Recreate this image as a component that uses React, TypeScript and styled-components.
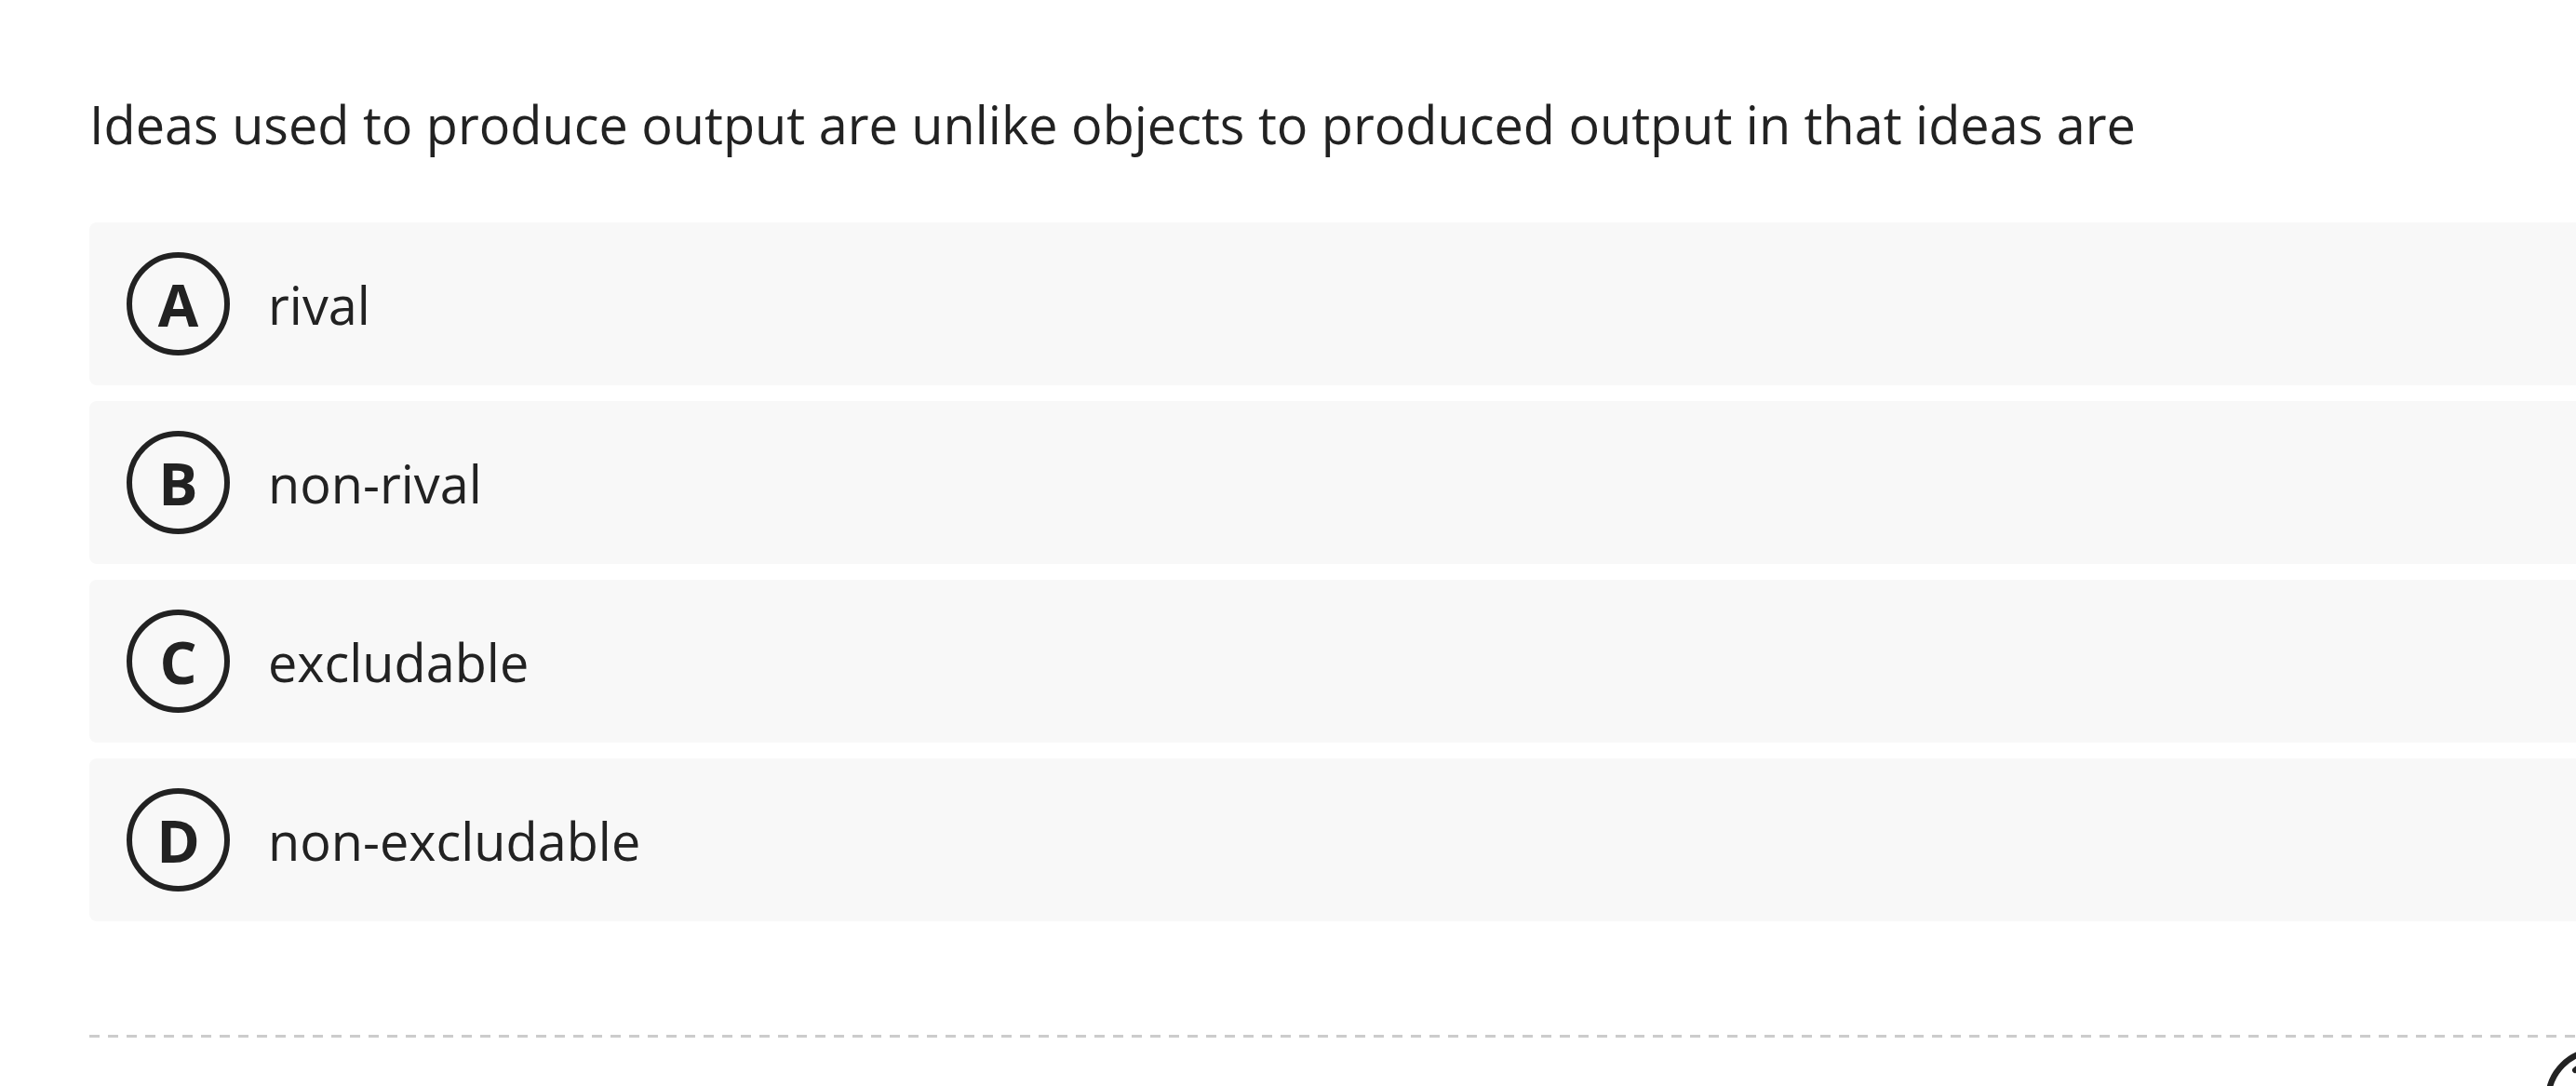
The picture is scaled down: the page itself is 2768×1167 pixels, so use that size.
import React from 'react';
import styled, { createGlobalStyle } from 'styled-components';

const GlobalStyle = createGlobalStyle`
    html, body {
        margin: 0;
        padding: 0;
        background: #ffffff;
        overflow: hidden;
    }
    body {
        font-family: "Open Sans", "Noto Sans", "Liberation Sans", sans-serif;
        color: #222222;
    }
`;

const Page = styled.div`
    box-sizing: border-box;
    width: 2846px;
    padding: 91px 0 0 96px;
`;

const Question = styled.p`
    margin: 0 0 64px 0;
    font-size: 55.8px;
    line-height: 84px;
    color: #222222;
`;

const OptionList = styled.div`
    display: flex;
    flex-direction: column;
    gap: 17px;
`;

const Option = styled.div`
    display: flex;
    align-items: center;
    gap: 41px;
    height: 175px;
    padding: 0 40px;
    background: #f8f8f8;
    border-radius: 8px;
    cursor: pointer;
`;

const Badge = styled.span`
    box-sizing: border-box;
    flex: 0 0 auto;
    display: flex;
    align-items: center;
    justify-content: center;
    width: 111px;
    height: 111px;
    border: 6.5px solid #222222;
    border-radius: 50%;
    font-size: 63px;
    font-weight: 700;
    line-height: 1;
    color: #222222;
`;

const Label = styled.span`
    font-size: 55.8px;
    line-height: 84px;
    color: #222222;
`;

const Divider = styled.div`
    margin-top: 122px;
    height: 3px;
    background-image: repeating-linear-gradient(
        to right,
        #cccccc 0,
        #cccccc 11px,
        transparent 11px,
        transparent 20px
    );
`;

const Footer = styled.div`
    display: flex;
    justify-content: flex-end;
    padding-top: 11px;
`;

const RoundButton = styled.span`
    display: block;
    width: 111px;
    height: 111px;
`;

const HelpIcon = () => (
    <svg width="111" height="111" viewBox="0 0 111 111">
        <circle cx="55.5" cy="55.5" r="52.25" fill="none" stroke="#222222" strokeWidth="6.5" />
        <path d="M32 24 A30 30 0 0 1 40 19" fill="none" stroke="#222222" strokeWidth="6" strokeLinecap="round" />
    </svg>
);

const options = [
    { key: 'A', text: 'rival' },
    { key: 'B', text: 'non-rival' },
    { key: 'C', text: 'excludable' },
    { key: 'D', text: 'non-excludable' },
];

export default function App() {
    return (
        <>
            <GlobalStyle />
            <Page>
                <Question>
                    Ideas used to produce output are unlike objects to produced output in that ideas are
                </Question>
                <OptionList>
                    {options.map(o => (
                        <Option key={o.key}>
                            <Badge>{o.key}</Badge>
                            <Label>{o.text}</Label>
                        </Option>
                    ))}
                </OptionList>
                <Divider />
                <Footer>
                    <RoundButton>
                        <HelpIcon />
                    </RoundButton>
                </Footer>
            </Page>
        </>
    );
}
